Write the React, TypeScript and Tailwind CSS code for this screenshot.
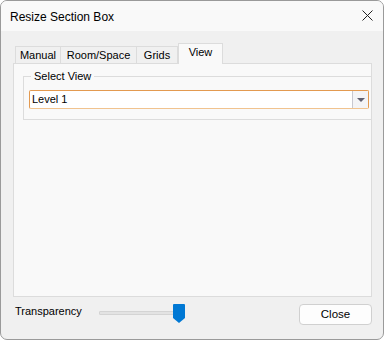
import React, { useState } from 'react';

const tabs = [
  { name: 'Manual', width: 'w-[46px]' },
  { name: 'Room/Space', width: 'w-[76px]' },
  { name: 'Grids', width: 'w-[41px]' },
  { name: 'View', width: 'w-[45px]' },
];

const App: React.FC = () => {
  const [activeTab, setActiveTab] = useState<string>('View');
  const [transparency] = useState<number>(74);

  return (
    <div
      className="w-[384px] h-[340px] bg-[#f0f0f0] border border-[#9a9a9a] rounded-[7px] overflow-hidden flex flex-col text-[11px] text-black"
      style={{ fontFamily: '"Liberation Sans", Arial, sans-serif' }}
    >
      {/* Title bar */}
      <div className="h-[30px] bg-[#f9f9f9] flex items-center justify-between pl-[9px] pr-[10px] shrink-0">
        <span className="text-[12px] leading-none mt-[2px]">Resize Section Box</span>
        <svg width="11" height="11" viewBox="0 0 11 11" className="-mt-[1px]">
          <path d="M0.5 0.5 L10.5 10.5 M10.5 0.5 L0.5 10.5" stroke="#222" strokeWidth="1" />
        </svg>
      </div>

      <div className="flex-1 flex flex-col pl-[12px] pr-[11px] pt-[12px]">
        {/* Tabs */}
        <div className="flex items-end h-[20px] pl-[2px]">
          {tabs.map((tab, i) => {
            const active = tab.name === activeTab;
            return (
              <button
                key={tab.name}
                onClick={() => setActiveTab(tab.name)}
                className={
                  active
                    ? `${tab.width} h-[21px] bg-[#f9f9f9] border border-b-0 border-[#dcdcdc] -mb-px relative z-10 leading-none pb-[4px]`
                    : `${tab.width} h-[17px] bg-[#f0f0f0] border border-b-0 border-[#dcdcdc] leading-none pt-[1px] ${i > 0 ? 'border-l-0' : ''}`
                }
              >
                {tab.name}
              </button>
            );
          })}
        </div>
        <div className="h-[234px] bg-[#f9f9f9] border border-[#dcdcdc] pl-[9px] pt-[5px] overflow-hidden">
          {/* Group box */}
          <fieldset className="border border-[#dcdcdc] border-r-0 pl-[5px] pr-[2px] pb-[10px]">
            <legend className="px-[3px] ml-[2px] leading-[14px]">Select View</legend>
            <div className="flex h-[19px] mt-[7px] border border-[#e39a50] border-b-[#f1c38e] rounded-[2px] bg-white">
              <div className="flex-1 pl-[2px] flex items-center leading-none">Level 1</div>
              <div className="w-[16px] border-l border-[#c8c8d0] bg-[#f4f4f6] flex items-center justify-center">
                <svg width="8" height="4" viewBox="0 0 8 4">
                  <path d="M0 0 H8 L4 4 Z" fill="#606070" />
                </svg>
              </div>
            </div>
          </fieldset>
        </div>

        {/* Footer */}
        <div className="flex items-start pt-[7px] pl-[2px]">
          <span className="w-[84px] leading-[13px] mt-[1px]">Transparency</span>
          <div className="relative w-[88px] h-[20px] flex items-center">
            <div className="w-[78px] h-[4px] bg-[#e3e3e3] border border-[#d4d4d4] rounded-[1px] mt-[-2px]" />
            <svg
              width="12"
              height="19"
              viewBox="0 0 12 19"
              className="absolute top-0"
              style={{ left: `${transparency}px` }}
            >
              <path d="M0 1 Q0 0 1 0 H11 Q12 0 12 1 V14 L6 19 L0 14 Z" fill="#0078d4" />
            </svg>
          </div>
          <div className="flex-1" />
          <button className="w-[73px] h-[21px] bg-[#fdfdfd] border border-[#d0d0d0] rounded-[4px] leading-none text-[11.5px]">
            Close
          </button>
        </div>
      </div>
    </div>
  );
};

export default App;
